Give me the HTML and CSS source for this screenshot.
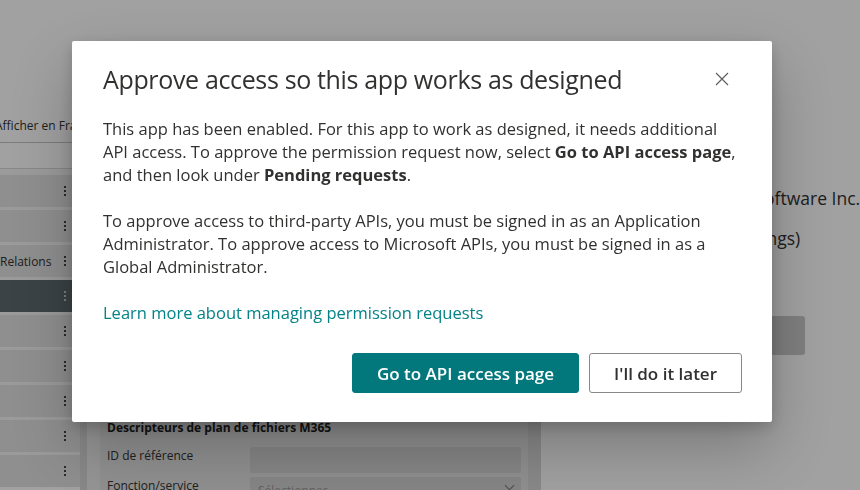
FILE: index.html
```html
<!DOCTYPE html>
<html lang="en">
<head>
    <meta charset="UTF-8">
    <meta name="viewport" content="width=device-width, initial-scale=1.0">
    <title>Approve access</title>
    <link rel="stylesheet" href="styles.css">
</head>
<body>
    <div class="page">
        <aside class="nav">
            <div class="nav-link">Afficher en Français</div>
            <div class="nav-search"></div>
            <ul class="nav-list">
                <li class="nav-item"><span></span><span class="more"><i></i><i></i><i></i></span></li>
                <li class="nav-item"><span></span><span class="more"><i></i><i></i><i></i></span></li>
                <li class="nav-item"><span>Relations</span><span class="more"><i></i><i></i><i></i></span></li>
                <li class="nav-item active"><span></span><span class="more"><i></i><i></i><i></i></span></li>
                <li class="nav-item"><span></span><span class="more"><i></i><i></i><i></i></span></li>
                <li class="nav-item"><span></span><span class="more"><i></i><i></i><i></i></span></li>
                <li class="nav-item"><span></span><span class="more"><i></i><i></i><i></i></span></li>
                <li class="nav-item"><span></span><span class="more"><i></i><i></i><i></i></span></li>
                <li class="nav-item"><span></span><span class="more"><i></i><i></i><i></i></span></li>
            </ul>
        </aside>
        <main class="content">
            <div class="card-wrap">
                <section class="card">
                    <h3>Descripteurs de plan de fichiers M365</h3>
                    <div class="field">
                        <label>ID de référence</label>
                        <div class="input"></div>
                    </div>
                    <div class="field">
                        <label>Fonction/service</label>
                        <div class="input select">Sélectionner...<span class="chev"></span></div>
                    </div>
                </section>
            </div>
            <section class="details">
                <div class="row"><span class="label">Éditeur</span><span>Contoso Software Inc.</span></div>
                <div class="row"><span class="label">Paramètres</span><span>Sites (Settings)</span></div>
                <div class="box"></div>
            </section>
        </main>
    </div>

    <div class="overlay"></div>

    <div class="dialog" role="dialog">
        <div class="dialog-head">
            <h1>Approve access so this app works as designed</h1>
            <button class="close" aria-label="Close">
                <svg width="14" height="14" viewBox="0 0 14 14"><path d="M1 1L13 13M13 1L1 13" stroke="#605e5c" stroke-width="1.2" fill="none"/></svg>
            </button>
        </div>
        <div class="dialog-body">
            <p>This app has been enabled. For this app to work as designed, it needs additional<br>API access. To approve the permission request now, select <b>Go to API access page</b>,<br>and then look under <b>Pending requests</b>.</p>
            <p>To approve access to third-party APIs, you must be signed in as an Application<br>Administrator. To approve access to Microsoft APIs, you must be signed in as a<br>Global Administrator.</p>
            <a href="#" class="learn">Learn more about managing permission requests</a>
        </div>
        <div class="actions">
            <button class="btn primary">Go to API access page</button>
            <button class="btn">I'll do it later</button>
        </div>
    </div>
</body>
</html>
```

FILE: styles.css
```css
* {
	box-sizing: border-box;
}

body {
	margin: 0;
	font-family: "Open Sans", "Noto Sans", sans-serif;
	color: #323130;
	overflow: hidden;
}

.page {
	display: flex;
	height: 490px;
	background: #fff;
}

/* left navigation */
.nav {
	width: 80px;
	flex: none;
	padding-top: 118px;
	background: #fff;
}

.nav-link {
	height: 24px;
	font-size: 12px;
	line-height: 16px;
	white-space: nowrap;
	overflow: hidden;
	text-indent: -5px;
}

.nav-search {
	height: 27px;
	border-top: 1px solid #c4c4c4;
	border-bottom: 1px solid #d8d8d8;
}

.nav-list {
	list-style: none;
	margin: 0;
	padding: 6px 0 0;
	display: flex;
	flex-direction: column;
	gap: 3px;
	background: #f6f6f6;
}

.nav-item {
	height: 32px;
	background: #e2e2e2;
	display: flex;
	align-items: center;
	justify-content: space-between;
	font-size: 12px;
	white-space: nowrap;
}

.nav-item.active {
	background: #5e6b6f;
}

.more {
	display: flex;
	flex-direction: column;
	gap: 2px;
	margin-right: 14px;
}

.more i {
	width: 2px;
	height: 2px;
	background: #444;
}

.nav-item.active .more i {
	background: #ccc;
}

/* main content */
.content {
	flex: 1;
	display: flex;
}

.card-wrap {
	width: 461px;
	flex: none;
	margin-top: 400px;
	padding-left: 13px;
	background: #ececec;
	border-left: 7px solid #d8d8d8;
}

.card {
	padding: 16px 7px 0 7px;
	background: #e4e4e4;
	border-right: 13px solid #dadada;
	height: 100%;
}

.card h3 {
	margin: 0 0 7px;
	font-size: 12px;
	line-height: 24px;
	font-weight: 700;
	color: #222;
}

.field {
	display: grid;
	grid-template-columns: 143px 1fr;
	margin-bottom: 4px;
	font-size: 12px;
}

.field label {
	line-height: 18px;
	color: #333;
}

.input {
	height: 26px;
	background: #d4d4d4;
	border-radius: 2px;
}

.select {
	display: flex;
	justify-content: space-between;
	padding: 5px 8px;
	color: #999;
}

.chev {
	width: 7px;
	height: 7px;
	border-right: 1px solid #777;
	border-bottom: 1px solid #777;
	transform: rotate(45deg);
}

.details {
	flex: 1;
	padding: 186px 0 0 24px;
	font-size: 17.5px;
	line-height: 24px;
}

.row {
	display: grid;
	grid-template-columns: 117px 1fr;
	white-space: nowrap;
	margin-bottom: 16px;
}

.box {
	width: 240px;
	height: 39px;
	margin-top: 66px;
	background: #c9c9c9;
	border-radius: 3px;
}

.overlay {
	position: fixed;
	inset: 0;
	background: rgba(0, 0, 0, 0.37);
}

/* dialog */
.dialog {
	position: absolute;
	left: 72px;
	top: 41px;
	width: 700px;
	padding: 22px 30px 29px 31px;
	background: #fff;
	border-radius: 2px;
	box-shadow: 0 26px 60px rgba(0, 0, 0, 0.24), 0 5px 15px rgba(0, 0, 0, 0.18);
}

.dialog-head {
	display: flex;
	align-items: center;
	justify-content: space-between;
}

.dialog-head h1 {
	margin: 0;
	font-size: 25px;
	line-height: 32px;
	font-weight: 400;
	letter-spacing: -0.35px;
	white-space: nowrap;
}

.close {
	width: 32px;
	height: 32px;
	margin-right: 4px;
	padding: 0;
	border: none;
	background: none;
	display: flex;
	align-items: center;
	justify-content: center;
	cursor: pointer;
}

.dialog-body {
	margin-top: 22px;
	font-size: 16.5px;
	line-height: 23px;
}

.dialog-body p {
	margin: 0 0 23px;
	white-space: nowrap;
}

.dialog-body b {
	font-weight: 700;
}

.learn {
	display: block;
	color: #038387;
	text-decoration: none;
}

.actions {
	display: flex;
	justify-content: flex-end;
	gap: 10px;
	margin-top: 29px;
}

.btn {
	height: 40px;
	padding: 0 24px;
	font-family: inherit;
	font-size: 17px;
	font-weight: 600;
	color: #323130;
	background: #fff;
	border: 1px solid #8a8886;
	border-radius: 3px;
	cursor: pointer;
}

.btn.primary {
	background: #03787c;
	border-color: #03787c;
	color: #fff;
}
```
